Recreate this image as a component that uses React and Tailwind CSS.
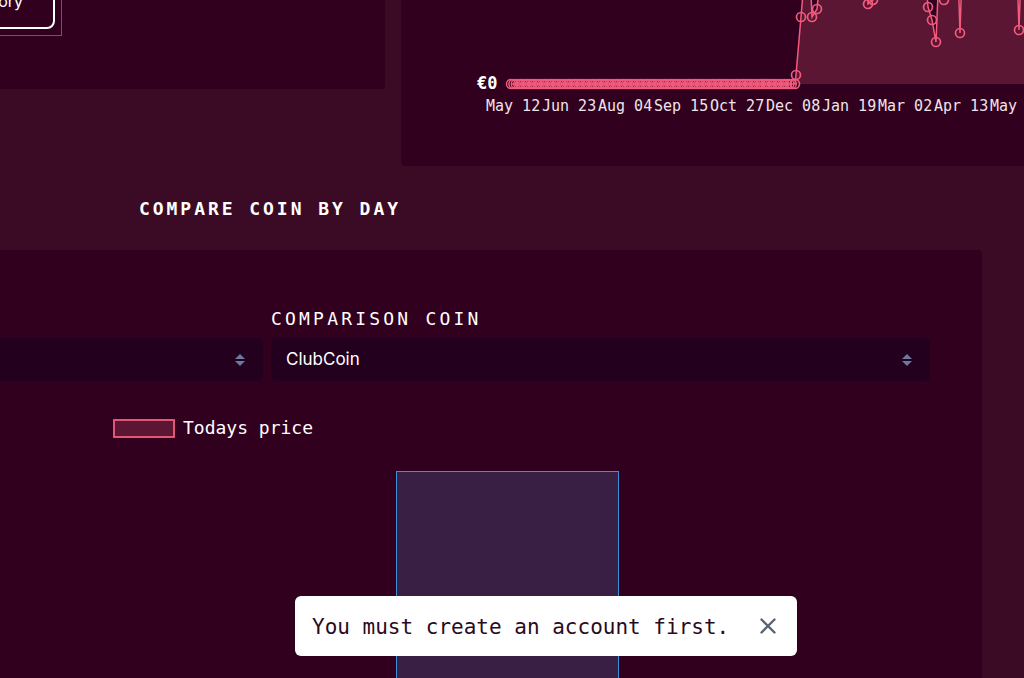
const mono = "font-['DejaVu_Sans_Mono',monospace]"

const ticks = ['May 12', 'Jun 23', 'Aug 04', 'Sep 15', 'Oct 27', 'Dec 08', 'Jan 19', 'Mar 02', 'Apr 13', 'May 25']

// price series in panel coordinates (y < 0 is above the visible area)
const series = [
  [394, 84], [395, 75], [400, 17], [404, -30], [409, -30], [411, 17], [416, 9], [420, -30],
  [464, -30], [467, 4], [472, 0], [476, -30], [524, -30], [527, 7], [531, 20], [535, 42],
  [538, -30], [543, 0], [547, -30], [557, -30], [559, 33], [561, -30], [616, -30], [618, 30],
  [620, -30], [640, -30],
]

function PriceChart() {
  const flat = []
  for (let x = 110; x <= 393; x += 2.4) flat.push(x)
  const line = 'M110,84 ' + series.map(([x, y]) => `L${x},${y}`).join(' ')
  const area = 'M394,84 ' + series.map(([x, y]) => `L${x},${y}`).join(' ') + ' L640,84 Z'

  return (
    <svg width="623" height="95" viewBox="0 0 623 95" className="absolute left-0 top-0">
      <path d={area} fill="#5a1632" />
      <path d={line} fill="none" stroke="#f25b7d" strokeWidth="1.5" />
      {flat.map((x) => (
        <circle key={x} cx={x} cy="84" r="4.5" fill="none" stroke="#f25b7d" strokeWidth="1.5" />
      ))}
      {series
        .filter(([, y]) => y >= 0)
        .map(([x, y]) => (
          <circle key={`${x}-${y}`} cx={x} cy={y} r="4.5" fill="none" stroke="#f25b7d" strokeWidth="1.7" />
        ))}
    </svg>
  )
}

function SelectArrows() {
  return (
    <svg width="12" height="14" viewBox="0 0 12 14">
      <path d="M6 1 L11 6 L1 6 Z" fill="#6b7a9a" />
      <path d="M6 13 L11 8 L1 8 Z" fill="#6b7a9a" />
    </svg>
  )
}

export default function App() {
  return (
    <div className={`relative w-[1024px] h-[678px] overflow-hidden bg-[#3b0a24] text-white ${mono}`}>
      {/* top row */}
      <div className="flex gap-4">
        <div className="w-[385px] h-[89px] bg-[#31001e] rounded-br overflow-hidden">
          <div className="mt-[-34px] ml-[-78px] w-[140px] border border-[#3f64a6] p-[6px]">
            <button className="w-full flex justify-end border-2 border-white rounded-lg pt-[14px] pb-[14px] pr-[30px] text-[16px] leading-6 font-['Inter',sans-serif] text-white">
              History
            </button>
          </div>
        </div>

        <div className="relative flex-1 h-[166px] bg-[#31001e] rounded-bl overflow-hidden">
          <PriceChart />
          <div className="relative pt-[73px]">
            <div className="pl-[76px] text-[17px] leading-5 font-bold">€0</div>
            <div className="flex pl-[85px] mt-[3px] text-[15px] leading-5 text-[#eee4ea] whitespace-nowrap">
              {ticks.map((t) => (
                <span key={t} className="w-[56px] shrink-0">{t}</span>
              ))}
            </div>
          </div>
        </div>
      </div>

      {/* heading */}
      <h2 className="mt-[31px] mb-[29px] pl-[139px] text-[18px] leading-6 font-bold tracking-[2.95px]">
        COMPARE COIN BY DAY
      </h2>

      {/* comparison panel */}
      <div className="w-[982px] h-[440px] bg-[#31001e] rounded-tr pt-[57px]">
        <div className="grid grid-cols-[283px_659px] gap-2 ml-[-20px]">
          <div className="flex flex-col">
            <div className="h-6 mb-[7px]"></div>
            <div className="h-[43px] rounded-md bg-[#23001e] flex items-center justify-end pr-[17px]">
              <SelectArrows />
            </div>
          </div>
          <div className="flex flex-col">
            <div className="h-6 mb-[7px] text-[18px] leading-6 tracking-[3.2px]">COMPARISON COIN</div>
            <div className="h-[43px] rounded-md bg-[#23001e] flex items-center justify-between pl-[15px] pr-[17px]">
              <span className="font-['Inter',sans-serif] text-[17px] mt-[1px]">ClubCoin</span>
              <SelectArrows />
            </div>
          </div>
        </div>

        <div className="flex items-center gap-2 pl-[113px] mt-[35px]">
          <div className="w-[62px] h-[19px] border-2 border-[#e35575] bg-[#5a1632]"></div>
          <span className="text-[18px] leading-6">Todays price</span>
        </div>

        <div className="ml-[396px] mt-[31px] w-[223px] h-[260px] border border-[#3b90da] bg-[#3a1f44]"></div>
      </div>

      {/* toast */}
      <div className="absolute left-[295px] bottom-[22px] h-[60px] flex items-center gap-[31px] pl-[17px] pr-[21px] bg-white rounded-md">
        <span className="mt-[3px] text-[21px] text-[#2b0a20] whitespace-nowrap">You must create an account first.</span>
        <svg width="16" height="16" viewBox="0 0 16 16">
          <path d="M1.5 1.5 L14.5 14.5 M14.5 1.5 L1.5 14.5" stroke="#5b6474" strokeWidth="2.4" strokeLinecap="round" />
        </svg>
      </div>
    </div>
  )
}
